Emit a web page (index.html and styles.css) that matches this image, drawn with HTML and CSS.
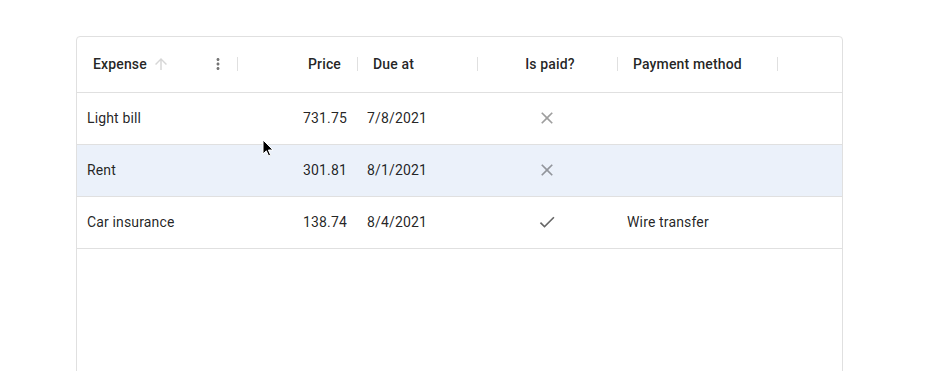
FILE: index.html
```html
<!DOCTYPE html>
<html lang="en">
<head>
<meta charset="utf-8">
<title>Expenses</title>
<link rel="stylesheet" href="styles.css">
</head>
<body>
<div class="page">
  <div class="grid">
    <div class="header">
      <div class="hcell expense">
        <span class="title">Expense</span>
        <span class="sort-btn">
          <svg viewBox="0 0 24 24" width="18" height="18"><path d="M4 12l1.41 1.41L11 7.83V20h2V7.83l5.58 5.59L20 12l-8-8-8 8z"/></svg>
        </span>
        <span class="menu-btn">
          <svg viewBox="0 0 24 24" width="18" height="18"><path d="M12 8c1.1 0 2-.9 2-2s-.9-2-2-2-2 .9-2 2 .9 2 2 2zm0 2c-1.1 0-2 .9-2 2s.9 2 2 2 2-.9 2-2-.9-2-2-2zm0 6c-1.1 0-2 .9-2 2s.9 2 2 2 2-.9 2-2-.9-2-2-2z"/></svg>
        </span>
      </div>
      <div class="hcell right"><span class="title">Price</span></div>
      <div class="hcell"><span class="title">Due at</span></div>
      <div class="hcell center"><span class="title">Is paid?</span></div>
      <div class="hcell"><span class="title">Payment method</span></div>
      <div class="hcell filler"></div>
    </div>

    <div class="row">
      <div class="cell">Light bill</div>
      <div class="cell right">731.75</div>
      <div class="cell">7/8/2021</div>
      <div class="cell center"><svg class="bool no" viewBox="0 0 24 24" width="20" height="20"><path d="M19 6.41 17.59 5 12 10.59 6.41 5 5 6.41 10.59 12 5 17.59 6.41 19 12 13.41 17.59 19 19 17.59 13.41 12z"/></svg></div>
      <div class="cell"></div>
      <div class="cell"></div>
    </div>
    <div class="row hovered">
      <div class="cell">Rent</div>
      <div class="cell right">301.81</div>
      <div class="cell">8/1/2021</div>
      <div class="cell center"><svg class="bool no" viewBox="0 0 24 24" width="20" height="20"><path d="M19 6.41 17.59 5 12 10.59 6.41 5 5 6.41 10.59 12 5 17.59 6.41 19 12 13.41 17.59 19 19 17.59 13.41 12z"/></svg></div>
      <div class="cell"></div>
      <div class="cell"></div>
    </div>
    <div class="row">
      <div class="cell">Car insurance</div>
      <div class="cell right">138.74</div>
      <div class="cell">8/4/2021</div>
      <div class="cell center"><svg class="bool yes" viewBox="0 0 24 24" width="20" height="20"><path d="M9 16.17 4.83 12l-1.42 1.41L9 19 21 7l-1.41-1.41z"/></svg></div>
      <div class="cell">Wire transfer</div>
      <div class="cell"></div>
    </div>
  </div>

  <svg class="pointer" viewBox="0 0 12 19" width="12" height="19">
    <path d="M1 1 L1 15 L4.3 11.8 L6.6 17 L8.6 16.1 L6.4 11 L11 11 Z" fill="#000" stroke="#fff" stroke-width="1" stroke-linejoin="round"/>
  </svg>
</div>
</body>
</html>
```

FILE: styles.css
```css
* {
  box-sizing: border-box;
}

html, body {
  margin: 0;
  background: #fff;
  overflow: hidden;
}

body {
  font-family: Roboto, "Liberation Sans", Arial, sans-serif;
  font-size: 14px;
  letter-spacing: 0.01071em;
  color: rgba(0, 0, 0, 0.87);
}

.page {
  position: relative;
  height: 371px;
  overflow: hidden;
  padding: 36px 0 0 76px;
}

.grid {
  width: 767px;
  height: 420px;
  border: 1px solid #e0e0e0;
  border-radius: 4px;
}

.header,
.row {
  display: grid;
  grid-template-columns: 160px 120px 120px 140px 160px 1fr;
  border-bottom: 1px solid #e0e0e0;
}

.header {
  height: 56px;
}

.row {
  height: 52px;
}

.row.hovered {
  background: #ebf1fa;
}

.hcell {
  position: relative;
  display: flex;
  align-items: center;
  padding: 0 16px 2px;
  font-weight: 500;
}

.hcell::after {
  content: "";
  position: absolute;
  right: -1px;
  top: 20px;
  width: 1px;
  height: 14px;
  background: #e0e0e0;
}

.hcell.filler::after {
  display: none;
}

.hcell.right {
  justify-content: flex-end;
}

.hcell.center {
  justify-content: center;
  padding-left: 22px;
}

.hcell.expense {
  padding-right: 5px;
}

.sort-btn,
.menu-btn {
  display: flex;
  align-items: center;
  justify-content: center;
  width: 28px;
  height: 28px;
}

.sort-btn svg {
  fill: rgba(0, 0, 0, 0.16);
}

.menu-btn {
  margin-left: auto;
}

.menu-btn svg {
  fill: rgba(0, 0, 0, 0.54);
}

.cell {
  display: flex;
  align-items: center;
  padding: 0 10px 2px;
  white-space: nowrap;
}

.cell.right {
  justify-content: flex-end;
}

.cell.center {
  justify-content: center;
}

.bool.no {
  fill: rgba(0, 0, 0, 0.38);
}

.bool.yes {
  fill: rgba(0, 0, 0, 0.6);
}

.pointer {
  position: absolute;
  left: 262px;
  top: 139px;
}
```
